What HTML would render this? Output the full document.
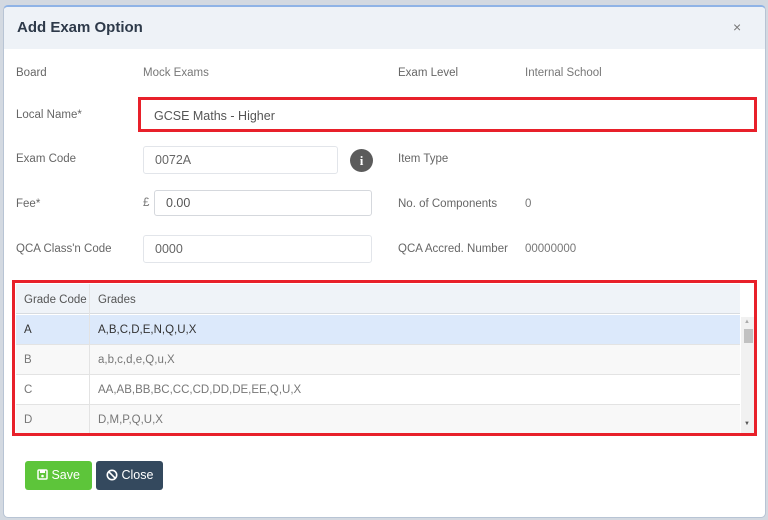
<!DOCTYPE html>
<html><head><style>
*{margin:0;padding:0;box-sizing:border-box}
body{width:768px;height:520px;background:#d3d9e1;font-family:"Liberation Sans",sans-serif;position:relative;overflow:hidden}
.a{position:absolute}
.m{left:3px;top:5px;width:763px;height:513px;background:#fff;border-radius:5px;border:1px solid #b8c4d4;border-top:2px solid #8fb3e6;overflow:hidden}
.hd{left:0;top:0;width:100%;height:42px;background:#eef2f7}
.l{font-size:11.5px;color:#666}
.v{font-size:11.5px;color:#777}
.in{border:1px solid #e2e5ea;border-radius:3px;font-size:12.5px;color:#666;padding-left:11px;display:flex;align-items:center;background:#fff}
.row{left:0;width:724px;height:30px;border-bottom:1px solid #e3e3e3;font-size:11.5px;color:#777}
.row span{position:absolute;top:9px}
</style></head><body>
<div class="a m">
<div class="a hd"></div>
<div class="a" style="left:13px;top:12px;font-size:15px;font-weight:bold;color:#2e3a4a">Add Exam Option</div>
<div class="a" style="left:729px;top:12px;font-size:14px;color:#777">×</div>
</div>
<div class="a l" style="left:16px;top:67px">Board</div>
<div class="a v" style="left:143px;top:67px">Mock Exams</div>
<div class="a l" style="left:398px;top:67px">Exam Level</div>
<div class="a v" style="left:525px;top:67px">Internal School</div>
<div class="a l" style="left:16px;top:109px">Local Name*</div>
<div class="a" style="left:138px;top:97px;width:619px;height:35px;border:3px solid #e8202a;font-size:12.5px;color:#555;padding:9px 0 0 13px">GCSE Maths - Higher</div>
<div class="a l" style="left:16px;top:153px">Exam Code</div>
<div class="a in" style="left:143px;top:146px;width:195px;height:28px">0072A</div>
<div class="a" style="left:350px;top:149px;width:23px;height:23px;border-radius:50%;background:#5b5b5b;color:#fff;font-size:13px;font-weight:bold;text-align:center;line-height:23px;font-family:'Liberation Serif',serif">i</div>
<div class="a l" style="left:398px;top:153px">Item Type</div>
<div class="a l" style="left:16px;top:198px">Fee*</div>
<div class="a v" style="left:143px;top:197px">£</div>
<div class="a in" style="left:154px;top:190px;width:218px;height:26px;border-color:#d5d8dd;color:#555">0.00</div>
<div class="a l" style="left:398px;top:198px">No. of Components</div>
<div class="a v" style="left:525px;top:198px">0</div>
<div class="a l" style="left:16px;top:243px">QCA Class'n Code</div>
<div class="a in" style="left:143px;top:235px;width:229px;height:28px">0000</div>
<div class="a l" style="left:398px;top:243px">QCA Accred. Number</div>
<div class="a v" style="left:525px;top:243px">00000000</div>
<div class="a" style="left:12px;top:280px;width:745px;height:156px;border:3px solid #e8202a;overflow:hidden">
 <div class="a" style="left:1px;top:1px;width:724px;height:30px;background:#eff3f8;border-bottom:1px solid #d7dbe0;font-size:11.5px;color:#555">
  <span class="a" style="left:8px;top:10px">Grade Code</span>
  <span class="a" style="left:82px;top:10px">Grades</span></div>
 <div class="a row" style="left:1px;top:32px;background:#dce9fb;color:#333"><span style="left:8px">A</span><span style="left:82px">A,B,C,D,E,N,Q,U,X</span></div>
 <div class="a row" style="left:1px;top:62px;background:#f8f8f8"><span style="left:8px">B</span><span style="left:82px">a,b,c,d,e,Q,u,X</span></div>
 <div class="a row" style="left:1px;top:92px;background:#fff"><span style="left:8px">C</span><span style="left:82px">AA,AB,BB,BC,CC,CD,DD,DE,EE,Q,U,X</span></div>
 <div class="a row" style="left:1px;top:122px;background:#f8f8f8"><span style="left:8px">D</span><span style="left:82px">D,M,P,Q,U,X</span></div>
 <div class="a" style="left:74px;top:1px;width:1px;height:150px;background:#e3e3e3"></div>
 <div class="a" style="left:726px;top:1px;width:13px;height:30px;background:#fff"></div>
 <div class="a" style="left:726px;top:34px;width:13px;height:116px;background:#f1f1f1"></div>
 <div class="a" style="left:729px;top:46px;width:9px;height:14px;background:#c1c1c1"></div>
 <div class="a" style="left:729px;top:36px;font-size:6px;color:#aaa">▲</div>
 <div class="a" style="left:729px;top:138px;font-size:6px;color:#555">▼</div>
</div>
<div class="a" style="left:25px;top:461px;width:67px;height:29px;background:#5dc53a;border-radius:3px;color:#fff;font-size:12.5px;line-height:29px;padding-left:12px">
<svg width="11" height="11" viewBox="0 0 11 11" style="vertical-align:-1px"><rect x="1" y="1" width="9" height="9" rx="1" fill="none" stroke="#fff" stroke-width="1.5"/><rect x="3" y="1" width="5" height="3" fill="#fff"/><circle cx="5.5" cy="7" r="1.3" fill="#fff"/></svg> Save</div>
<div class="a" style="left:96px;top:461px;width:67px;height:29px;background:#34495e;border-radius:3px;color:#fff;font-size:12.5px;line-height:29px;padding-left:10px">
<svg width="12" height="12" viewBox="0 0 12 12" style="vertical-align:-2px"><circle cx="6" cy="6" r="4.7" fill="none" stroke="#fff" stroke-width="1.6"/><line x1="2.8" y1="2.8" x2="9.2" y2="9.2" stroke="#fff" stroke-width="1.6"/></svg> Close</div>
</body></html>
